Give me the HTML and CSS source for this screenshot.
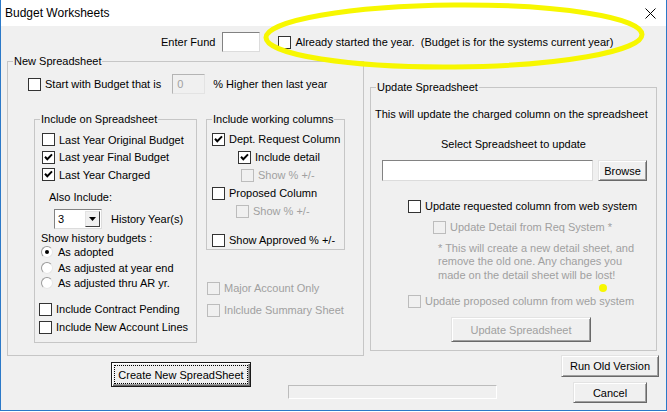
FILE: index.html
```html
<!DOCTYPE html>
<html>
<head>
<meta charset="utf-8">
<title>Budget Worksheets</title>
<link rel="stylesheet" href="styles.css">
</head>
<body>
<div class="window">
  <div class="titlebar">
    <span class="title">Budget Worksheets</span>
    <svg class="close" width="11" height="11" viewBox="0 0 11 11"><path d="M0.5 0.5 L10.5 10.5 M10.5 0.5 L0.5 10.5" stroke="#000" stroke-width="1" fill="none"/></svg>
  </div>
  <div class="client">
    <div class="fund-row">
      <span>Enter Fund</span>
      <span class="textbox fund-box"></span>
      <div class="chk started"><span class="box"></span><span>Already started the year.&nbsp; (Budget is for the systems current year)</span></div>
    </div>
    <div class="main">
      <div class="left">
        <fieldset class="group new-sheet">
          <legend>New Spreadsheet</legend>
          <div class="start-row">
            <span class="box"></span><span class="gap-text">Start with Budget that is</span>
            <span class="textbox num-box">0</span>
            <span class="pct">% Higher then last year</span>
          </div>
          <div class="groups">
            <fieldset class="group inc-sheet">
              <legend>Include on Spreadsheet</legend>
              <div class="chk r17 first p7"><span class="box"></span><span>Last Year Original Budget</span></div>
              <div class="chk r17 p7"><span class="box"><svg width="11" height="11" viewBox="0 0 11 11"><polyline points="2,4.8 4.3,7.2 9,2.4" fill="none" stroke="#000" stroke-width="2"/></svg></span><span>Last year Final Budget</span></div>
              <div class="chk r17 p7"><span class="box"><svg width="11" height="11" viewBox="0 0 11 11"><polyline points="2,4.8 4.3,7.2 9,2.4" fill="none" stroke="#000" stroke-width="2"/></svg></span><span>Last Year Charged</span></div>
              <div class="also">Also Include:</div>
              <div class="combo-row">
                <div class="combo"><span class="combo-val">3</span><span class="combo-btn"><svg width="7" height="4" viewBox="0 0 7 4"><path d="M0 0 H7 L3.5 4 Z" fill="#000"/></svg></span></div>
                <span class="hist">History Year(s)</span>
              </div>
              <div class="hist-label">Show history budgets :</div>
              <div class="radio-row"><span class="radio on"></span><span>As adopted</span></div>
              <div class="radio-row"><span class="radio"></span><span>As adjusted at year end</span></div>
              <div class="radio-row"><span class="radio"></span><span>As adjusted thru AR yr.</span></div>
              <div class="chk p4 contract"><span class="box"></span><span>Include Contract Pending</span></div>
              <div class="chk p4"><span class="box"></span><span>Include New Account Lines</span></div>
            </fieldset>
            <div class="col2">
              <fieldset class="group work-cols">
                <legend>Include working columns</legend>
                <div class="chk dept"><span class="box"><svg width="11" height="11" viewBox="0 0 11 11"><polyline points="2,4.8 4.3,7.2 9,2.4" fill="none" stroke="#000" stroke-width="2"/></svg></span><span>Dept. Request Column</span></div>
                <div class="chk p31"><span class="box"><svg width="11" height="11" viewBox="0 0 11 11"><polyline points="2,4.8 4.3,7.2 9,2.4" fill="none" stroke="#000" stroke-width="2"/></svg></span><span>Include detail</span></div>
                <div class="chk disabled p34"><span class="box"></span><span>Show % +/-</span></div>
                <div class="chk p5"><span class="box"></span><span>Proposed Column</span></div>
                <div class="chk disabled p29"><span class="box"></span><span>Show % +/-</span></div>
                <div class="chk p5 approved"><span class="box"></span><span>Show Approved % +/-</span></div>
              </fieldset>
              <div class="chk disabled major"><span class="box"></span><span>Major Account Only</span></div>
              <div class="chk disabled summary"><span class="box"></span><span>Inlclude Summary Sheet</span></div>
            </div>
          </div>
        </fieldset>
        <div class="create-row">
          <div class="btn default create-btn"><span class="focus">Create New SpreadSheet</span></div>
          <div class="progress"></div>
        </div>
      </div>
      <div class="right">
        <fieldset class="group update">
          <legend>Update Spreadsheet</legend>
          <div class="info">This will update the charged column on the spreadsheet</div>
          <div class="select-label">Select Spreadsheet to update</div>
          <div class="browse-row">
            <span class="textbox file-box"></span>
            <div class="btn browse-btn">Browse</div>
          </div>
          <div class="chk upd-req"><span class="box"></span><span>Update requested column from web system</span></div>
          <div class="chk disabled upd-detail"><span class="box"></span><span>Update Detail from Req System *</span></div>
          <div class="note">* This will create a new detail sheet, and<br>remove the old one. Any changes you<br>made on the detail sheet will be lost!</div>
          <div class="chk disabled upd-prop"><span class="box"></span><span>Update proposed column from web system</span></div>
          <div class="btn disabled upd-btn">Update Spreadsheet</div>
        </fieldset>
        <div class="btn run-btn">Run Old Version</div>
        <div class="btn cancel-btn">Cancel</div>
      </div>
    </div>
  </div>
  <svg class="highlight" width="667" height="412" viewBox="0 0 667 412"><ellipse cx="454" cy="36" rx="188" ry="31" transform="rotate(-0.5 454 36)" fill="none" stroke="#f7f700" stroke-width="5"/></svg>
  <span class="dot"></span>
</div>
</body>
</html>
```

FILE: styles.css
```css
html, body {
  margin: 0;
  padding: 0;
  background: #ffffff;
}
body {
  font-family: "Liberation Sans", Arial, sans-serif;
  font-size: 11px;
  color: #000;
}
.window {
  position: relative;
  width: 667px;
  height: 411px;
  box-sizing: border-box;
  border: 1px solid #2b79c8;
  border-top: none;
  background: #f0f0f0;
  overflow: hidden;
}
.titlebar {
  height: 26px;
  background: #fff;
  display: flex;
  align-items: center;
  justify-content: space-between;
  padding: 0 10px 0 4px;
}
.title {
  font-family: "Liberation Sans", Arial, sans-serif;
  font-size: 12px;
  color: #000;
}
.client {
  padding-left: 6px;
}
.fund-row {
  display: flex;
  align-items: center;
  height: 20px;
  margin-top: 6px;
  padding-left: 154px;
  white-space: nowrap;
}
.textbox {
  display: inline-block;
  box-sizing: border-box;
  background: #fff;
  border: 1px solid;
  border-color: #828282 #dcdcdc #dcdcdc #828282;
}
.fund-box {
  width: 38px;
  height: 20px;
  margin-left: 7px;
}
.started {
  margin-left: 18px;
}
.chk {
  display: flex;
  align-items: center;
  height: 18px;
  white-space: nowrap;
}
.box {
  display: inline-flex;
  align-items: center;
  justify-content: center;
  box-sizing: border-box;
  width: 13px;
  height: 13px;
  flex: none;
  background: #fff;
  border: 1px solid #333;
  margin-right: 4px;
}
.box svg {
  display: block;
}
.chk.disabled {
  color: #a0a0a0;
}
.chk.disabled .box {
  background: #f0f0f0;
  border-color: #bcbcbc;
}
.main {
  display: flex;
  margin-top: 3px;
}
.left {
  width: 357px;
  flex: none;
}
fieldset.group {
  margin: 0;
  padding: 0;
  border: 1px solid #c6c6c6;
  box-sizing: border-box;
  min-width: 0;
}
fieldset.group legend {
  padding: 0 1px;
  margin-left: 5px;
  line-height: 13px;
  height: 13px;
}
.new-sheet {
  height: 301px;
}
.start-row {
  display: flex;
  align-items: center;
  height: 20px;
  margin-top: 6px;
  padding-left: 20px;
  white-space: nowrap;
}
.num-box {
  width: 33px;
  height: 20px;
  margin-left: 11px;
  background: #f0f0f0;
  border-color: #b4b4b4 #e3e3e3 #e3e3e3 #b4b4b4;
  color: #a0a0a0;
  padding-left: 4px;
  line-height: 18px;
}
.pct {
  margin-left: 8px;
}
.groups {
  display: flex;
  margin-top: 19px;
  padding-left: 26px;
}
.inc-sheet {
  width: 163px;
  height: 230px;
  flex: none;
}
.r17 {
  height: 17.5px;
}
.first {
  margin-top: 5px;
}
.p4 { padding-left: 4px; }
.p5 { padding-left: 5px; }
.p7 { padding-left: 7px; }
.p29 { padding-left: 29px; }
.p31 { padding-left: 31px; }
.p34 { padding-left: 34px; }
.also {
  margin-top: 7px;
  padding-left: 14px;
  line-height: 13px;
}
.combo-row {
  display: flex;
  align-items: center;
  height: 20px;
  margin-top: 5.5px;
  padding-left: 19px;
}
.combo {
  display: flex;
  align-items: center;
  justify-content: space-between;
  box-sizing: border-box;
  width: 48px;
  height: 20px;
  background: #fff;
  border: 1px solid;
  border-color: #828282 #dcdcdc #dcdcdc #828282;
  padding: 0 1px 0 3px;
}
.combo-btn {
  display: flex;
  align-items: center;
  justify-content: center;
  box-sizing: border-box;
  width: 15px;
  height: 16px;
  background: #f0f0f0;
  border: 1px solid;
  border-color: #e3e3e3 #404040 #404040 #e3e3e3;
}
.combo-btn svg {
  display: block;
}
.hist {
  margin-left: 9px;
}
.hist-label {
  margin-top: 2.5px;
  padding-left: 6px;
  line-height: 13px;
}
.radio-row {
  display: flex;
  align-items: center;
  height: 15.5px;
  padding-left: 6px;
  white-space: nowrap;
}
.radio {
  display: inline-flex;
  align-items: center;
  justify-content: center;
  box-sizing: border-box;
  width: 12px;
  height: 12px;
  border-radius: 50%;
  border: 1px solid;
  border-color: #9a9a9a #e6e6e6 #e6e6e6 #9a9a9a;
  background: #fff;
  margin-right: 5px;
  flex: none;
}
.radio.on::after {
  content: "";
  width: 4px;
  height: 4px;
  border-radius: 50%;
  background: #000;
}
.contract {
  margin-top: 9px;
}
.col2 {
  margin-left: 9px;
  width: 139px;
  flex: none;
}
.work-cols {
  height: 137px;
}
.dept {
  margin-top: 4px;
  padding-left: 5px;
}
.approved {
  margin-top: 11px;
}
.major {
  margin-top: 29px;
  padding-left: 1px;
}
.summary {
  margin-top: 4px;
  padding-left: 1px;
}
.btn {
  display: flex;
  align-items: center;
  justify-content: center;
  box-sizing: border-box;
  background: #f0f0f0;
  border: 1px solid;
  border-color: #e3e3e3 #696969 #696969 #e3e3e3;
  box-shadow: inset 1px 1px #fff, inset -1px -1px #a0a0a0;
  white-space: nowrap;
  flex: none;
}
.btn.disabled {
  color: #a0a0a0;
}
.btn.default {
  border-color: #1a1a1a;
  box-shadow: inset 1px 1px #fff, inset -1px -1px #696969, inset -2px -2px #a0a0a0;
  padding: 3px;
  align-items: stretch;
}
.focus {
  flex: 1;
  display: flex;
  align-items: center;
  justify-content: center;
  outline: 1px dotted #000;
  outline-offset: 0;
}
.create-row {
  display: flex;
  align-items: flex-start;
  margin-top: 6px;
}
.create-btn {
  margin-left: 104px;
  width: 140px;
  height: 25px;
}
.progress {
  flex: none;
  margin-left: 37px;
  margin-top: 23px;
  width: 209px;
  height: 14px;
  box-sizing: border-box;
  background: #f0f0f0;
  border: 1px solid;
  border-color: #bcbcbc #fff #fff #bcbcbc;
}
.right {
  margin-left: 6px;
  margin-top: 26px;
  width: 287px;
  flex: none;
}
.update {
  height: 270px;
}
.info {
  margin-top: 13.5px;
  padding-left: 4px;
  line-height: 13px;
  white-space: nowrap;
}
.select-label {
  margin-top: 17px;
  text-align: center;
  line-height: 13px;
}
.browse-row {
  display: flex;
  height: 21px;
  margin-top: 9.5px;
  padding-left: 11px;
}
.file-box {
  width: 211px;
  height: 21px;
}
.browse-btn {
  margin-left: 5px;
  width: 49px;
  height: 21px;
}
.upd-req {
  margin-top: 16px;
  padding-left: 37px;
}
.upd-detail {
  margin-top: 3px;
  padding-left: 62px;
}
.note {
  margin-top: 5.5px;
  padding-left: 67px;
  line-height: 13.5px;
  color: #a0a0a0;
  white-space: nowrap;
}
.upd-prop {
  margin-top: 10px;
  padding-left: 37px;
}
.upd-btn {
  margin-top: 7px;
  margin-left: 80px;
  width: 140px;
  height: 25px;
}
.run-btn {
  margin-top: 4px;
  margin-left: 191px;
  width: 98px;
  height: 22px;
}
.cancel-btn {
  margin-top: 5px;
  margin-left: 203px;
  width: 74px;
  height: 21px;
}
.highlight {
  position: absolute;
  left: -1px;
  top: 0;
  pointer-events: none;
}
.dot {
  position: absolute;
  left: 598px;
  top: 284px;
  width: 8px;
  height: 8px;
  border-radius: 50%;
  background: #f7f700;
}
```
